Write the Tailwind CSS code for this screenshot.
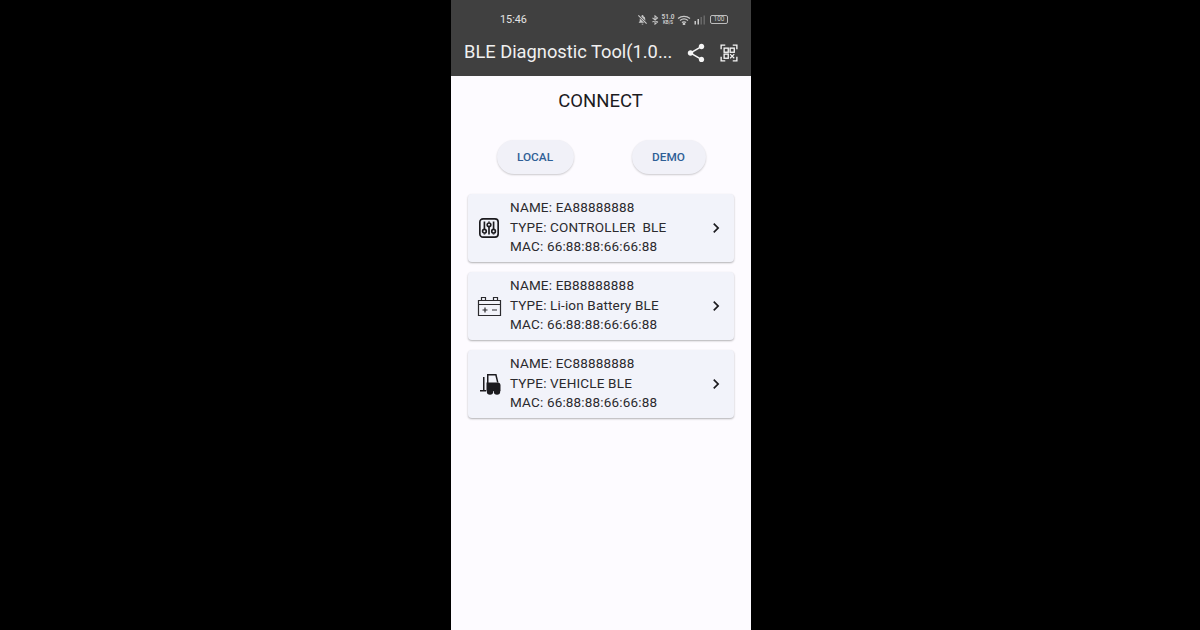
<!DOCTYPE html>
<html lang="en">
<head>
    <meta charset="UTF-8">
    <meta name="viewport" content="width=device-width, initial-scale=1.0">
    <title>BLE Diagnostic Tool</title>
    <script src="https://cdn.jsdelivr.net/npm/@tailwindcss/browser@4"></script>
</head>
<body class="bg-black h-[630px] overflow-hidden font-['Roboto',sans-serif]">
    <div class="ml-[451px] w-[300px] h-[630px] bg-[#fdfbff] flex flex-col">
        <!-- app bar -->
        <header class="h-[76px] bg-[#404040] text-[#f0f0f0] shrink-0">
            <div class="h-[38px] pt-[1px] flex items-center pl-[49px] pr-[23px] justify-between">
                <span class="text-[10.800px] text-[#e4e4e4] mt-[1px]">15:46</span>
                <div class="flex items-center gap-[3px] text-[#c8c8c8]">
                    <svg class="w-[11px] h-[11px]" viewBox="0 0 24 24" fill="currentColor"><path d="M12 2a2 2 0 0 0-2 2v1a6 6 0 0 0-4 6v5l-2 2v1h16v-1l-2-2v-5a6 6 0 0 0-4-6V4a2 2 0 0 0-2-2zM10 21a2 2 0 0 0 4 0z"/><path d="M3 3l18 18" stroke="#404040" stroke-width="5"/><path d="M3 3l18 18" stroke="currentColor" stroke-width="2.500"/></svg>
                    <svg class="w-[8px] h-[10px]" viewBox="0 0 16 24" fill="none" stroke="currentColor" stroke-width="2.500"><path d="M2 7l12 10-6 5V2l6 5L2 17"/></svg>
                    <div class="flex flex-col items-center text-[6.500px] leading-[5px] font-bold w-[12px]"><span>51.0</span><span class="text-[4.500px]">KB/S</span></div>
                    <svg class="w-[14px] h-[10px]" viewBox="0 0 26 20" fill="none" stroke="currentColor" stroke-width="2.500"><path d="M1 7c7-6 17-6 24 0M5 11c5-4 11-4 16 0M9 15c2-2 6-2 8 0"/><circle cx="13" cy="18" r="1.500" fill="currentColor"/></svg>
                    <svg class="w-[12px] h-[10px]" viewBox="0 0 24 20" fill="currentColor"><rect x="1" y="12" width="3" height="7"/><rect x="7" y="8" width="3" height="11"/><rect x="13" y="4" width="3" height="15" opacity=".3"/><rect x="19" y="1" width="3" height="18" opacity=".3"/></svg>
                    <div class="w-[18px] h-[9px] border border-[#bdbdbd] rounded-[2px] text-[6.500px] leading-[7px] text-center ml-[1px]">100</div>
                </div>
            </div>
            <div class="h-[29px] flex items-center pl-[13px] pr-[13px]">
                <h1 class="text-[18.300px] leading-none whitespace-nowrap w-[210px]">BLE Diagnostic Tool(1.0...</h1>
                <svg class="w-[22px] h-[22px] ml-[11px] shrink-0" viewBox="0 0 24 24" fill="#f5f5f5"><path d="M18 16.080c-.76 0-1.440.3-1.960.77L8.910 12.700c.05-.23.09-.46.09-.7s-.04-.47-.09-.7l7.050-4.110c.54.5 1.250.81 2.040.81 1.660 0 3-1.340 3-3s-1.340-3-3-3-3 1.340-3 3c0 .24.04.47.09.7L8.040 9.810C7.500 9.310 6.790 9 6 9c-1.660 0-3 1.340-3 3s1.340 3 3 3c.79 0 1.500-.31 2.040-.81l7.120 4.160c-.05.21-.08.43-.08.65 0 1.610 1.310 2.920 2.920 2.920s2.920-1.310 2.920-2.920-1.310-2.920-2.920-2.920z"/></svg>
                <svg class="w-[18px] h-[18px] ml-[13px] shrink-0" viewBox="0 0 24 24" fill="none" stroke="#f5f5f5" stroke-width="1.800"><path d="M1.500 7V1.500H7M17 1.500h5.500V7M22.500 17v5.500H17M7 22.500H1.500V17"/><rect x="5.500" y="5.500" width="5.500" height="5.500"/><rect x="13.500" y="5.500" width="5.500" height="5.500"/><rect x="5.500" y="13.500" width="5.500" height="5.500"/><path stroke-width="1.500" d="M13.500 13.500l5.500 5.500M19 13.500l-5.500 5.500"/></svg>
            </div>
        </header>

        <h2 class="text-[18.500px] leading-[22px] text-[#1c1b1f] text-center mt-[14px] pr-[1px]">CONNECT</h2>

        <!-- source buttons -->
        <div class="flex mt-[28px] pl-[46px]">
            <button class="w-[77px] h-[34px] pr-[1px] pt-[1px] rounded-full bg-[#f1f1f8] shadow-[0_1px_2px_rgba(0,0,0,0.2)] text-[#2f5f96] text-[11.800px] font-medium">LOCAL</button>
            <button class="w-[74px] h-[34px] pr-[1px] pt-[1px] rounded-full bg-[#f1f1f8] shadow-[0_1px_2px_rgba(0,0,0,0.2)] text-[#2f5f96] text-[11.800px] font-medium ml-[58px]">DEMO</button>
        </div>

        <!-- device list -->
        <div class="flex flex-col gap-[10px] mt-[20px] mx-[17px] text-[13.500px] leading-[19.500px] tracking-[0.17px] text-[#2b2a2e]">
            <div class="h-[68px] rounded-[4px] bg-[#f2f3fa] shadow-[0_1px_2px_rgba(0,0,0,0.3)] flex items-center">
                <div class="w-[42px] flex justify-center shrink-0">
                    <svg class="w-[22px] h-[22px] mb-[1px]" viewBox="0 0 24 24" fill="none" stroke="#1c1b1f" stroke-width="1.800"><rect x="2" y="2" width="20" height="20" rx="3.500"/><path d="M7 5v8M7 18v1M12 5v1M12 11v8M17 5v8M17 18v1"/><circle cx="7" cy="15.500" r="2"/><circle cx="12" cy="8.500" r="2"/><circle cx="17" cy="15.500" r="2"/></svg>
                </div>
                <div class="flex-1 pb-[1px]">
                    <p>NAME: EA88888888</p>
                    <p class="whitespace-pre">TYPE: CONTROLLER  BLE</p>
                    <p>MAC: 66:88:88:66:66:88</p>
                </div>
                <svg class="w-[20px] h-[20px] mr-[8px] mb-[1px]" viewBox="0 0 24 24" fill="#1c1b1f"><path d="M10 6 8.590 7.410 13.170 12l-4.580 4.590L10 18l6-6z"/></svg>
            </div>
            <div class="h-[68px] rounded-[4px] bg-[#f2f3fa] shadow-[0_1px_2px_rgba(0,0,0,0.3)] flex items-center">
                <div class="w-[42px] flex justify-center shrink-0">
                    <svg class="w-[25px] h-[22px] mb-[1px]" viewBox="0 0 25 22" fill="none" stroke="#2b2a2e" stroke-width="1.200"><path d="M1.500 5.500h22v15h-22zM1.500 9.500h22M4.500 5.500V2.500h4v3M16.500 5.500V2.500h4v3M5.500 15h5M8 12.500v5M15 15h5"/></svg>
                </div>
                <div class="flex-1 pb-[1px]">
                    <p>NAME: EB88888888</p>
                    <p>TYPE: Li-ion Battery BLE</p>
                    <p>MAC: 66:88:88:66:66:88</p>
                </div>
                <svg class="w-[20px] h-[20px] mr-[8px] mb-[1px]" viewBox="0 0 24 24" fill="#1c1b1f"><path d="M10 6 8.590 7.410 13.170 12l-4.580 4.590L10 18l6-6z"/></svg>
            </div>
            <div class="h-[68px] rounded-[4px] bg-[#f2f3fa] shadow-[0_1px_2px_rgba(0,0,0,0.3)] flex items-center">
                <div class="w-[42px] flex justify-center shrink-0">
                    <svg class="w-[24px] h-[22px] mb-[1px]" viewBox="0 0 24 22" fill="#1c1b1f"><path d="M6 4h1.500v13H9v1.500H3V17h3z"/><path d="M10 1h9.500l2 8.500H20L18.300 2.500h-6.800V10H10z"/><path d="M9.500 9.500h11q3 0 3 3V18h-14z"/><circle cx="13" cy="18.500" r="3.200"/><circle cx="20" cy="18.500" r="3.200"/></svg>
                </div>
                <div class="flex-1 pb-[1px]">
                    <p>NAME: EC88888888</p>
                    <p>TYPE: VEHICLE BLE</p>
                    <p>MAC: 66:88:88:66:66:88</p>
                </div>
                <svg class="w-[20px] h-[20px] mr-[8px] mb-[1px]" viewBox="0 0 24 24" fill="#1c1b1f"><path d="M10 6 8.590 7.410 13.170 12l-4.580 4.590L10 18l6-6z"/></svg>
            </div>
        </div>
    </div>
</body>
</html>
